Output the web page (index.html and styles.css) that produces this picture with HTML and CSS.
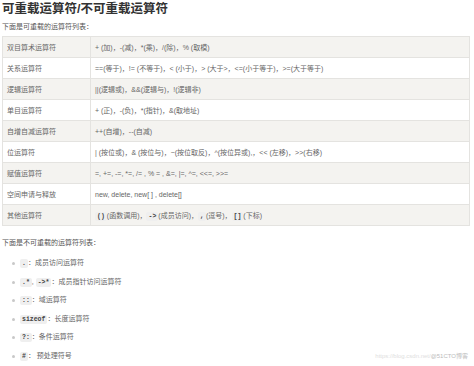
FILE: index.html
```html
<!DOCTYPE html>
<html lang="zh-CN">
<head>
<meta charset="utf-8">
<link rel="stylesheet" href="styles.css">
</head>
<body>
<div class="page">
  <h1 class="title">可重载运算符/不可重载运算符</h1>
  <p class="intro">下面是可重载的运算符列表：</p>
  <table class="ops">
    <tr><td class="name">双目算术运算符</td><td>+ (加)，-(减)，*(乘)，/(除)，% (取模)</td></tr>
    <tr><td class="name">关系运算符</td><td>==(等于)，!= (不等于)，&lt; (小于)，&gt; (大于&gt;，&lt;=(小于等于)，&gt;=(大于等于)</td></tr>
    <tr><td class="name">逻辑运算符</td><td>||(逻辑或)，&amp;&amp;(逻辑与)，!(逻辑非)</td></tr>
    <tr><td class="name">单目运算符</td><td>+ (正)，-(负)，*(指针)，&amp;(取地址)</td></tr>
    <tr><td class="name">自增自减运算符</td><td>++(自增)，--(自减)</td></tr>
    <tr><td class="name">位运算符</td><td>| (按位或)，&amp; (按位与)，~(按位取反)，^(按位异或),，&lt;&lt; (左移)，&gt;&gt;(右移)</td></tr>
    <tr><td class="name">赋值运算符</td><td>=, +=, -=, *=, /= , % = , &amp;=, |=, ^=, &lt;&lt;=, &gt;&gt;=</td></tr>
    <tr><td class="name">空间申请与释放</td><td>new, delete, new[ ] , delete[]</td></tr>
    <tr><td class="name">其他运算符</td><td><code>()</code>(函数调用)，<code>-&gt;</code>(成员访问)，<code>,</code>(逗号)，<code>[]</code>(下标)</td></tr>
  </table>
  <p class="intro second">下面是不可重载的运算符列表：</p>
  <ul class="list">
    <li><code>.</code>：成员访问运算符</li>
    <li><code>.*</code>, <code>-&gt;*</code>：成员指针访问运算符</li>
    <li><code>::</code>：域运算符</li>
    <li><code>sizeof</code>：长度运算符</li>
    <li><code>?:</code>：条件运算符</li>
    <li><code>#</code>： 预处理符号</li>
  </ul>
  <div class="mark"><span class="url">https://blog.csdn.net/</span><span class="brand">@51CTO博客</span></div>
</div>
</body>
</html>
```
FILE: styles.css
```css
html, body {
  margin: 0;
  padding: 0;
  background: #fff;
}
body {
  font-family: "Liberation Sans", "Noto Sans CJK SC", sans-serif;
  color: #555;
}
.page {
  position: relative;
  width: 474px;
  height: 366px;
  overflow: hidden;
  padding: 0 4px 0 2px;
  box-sizing: border-box;
}
.title {
  margin: 0;
  padding-top: 1px;
  font-size: 12.5px;
  line-height: 16px;
  font-weight: bold;
  color: #333;
}
.intro {
  margin: 4px 0 0 0;
  font-size: 7px;
  line-height: 12px;
  color: #555;
}
.ops {
  margin-top: 3px;
  width: 468px;
  border-collapse: collapse;
  font-size: 7px;
  color: #666;
}
.ops td {
  height: 20px;
  padding: 0 4px;
  border: 1px solid #e4e3e0;
  vertical-align: middle;
  white-space: nowrap;
}
.ops td.name {
  width: 79px;
}
.ops tr:nth-child(odd) td {
  background: #f4f3f0;
}
code {
  font-family: "Liberation Mono", monospace;
  font-weight: bold;
  font-size: 6.5px;
  line-height: 1;
  background: #efefef;
  color: #444;
  padding: 1px 2px;
  border-radius: 2px;
}
.second {
  margin-top: 11px;
}
.list {
  margin: 5px 0 0 0;
  padding: 0 0 0 18px;
  font-size: 7px;
  color: #666;
}
.list li {
  height: 18.6px;
  line-height: 18.6px;
  list-style: none;
  position: relative;
}
.list li::before {
  content: "";
  position: absolute;
  left: -8px;
  top: 8px;
  width: 3px;
  height: 3px;
  border-radius: 50%;
  background: #c8c8c8;
}
.mark {
  position: absolute;
  right: 6px;
  bottom: 6px;
  font-size: 6px;
  color: #e0e0e0;
}
.mark .brand {
  color: #bbb;
}
```
